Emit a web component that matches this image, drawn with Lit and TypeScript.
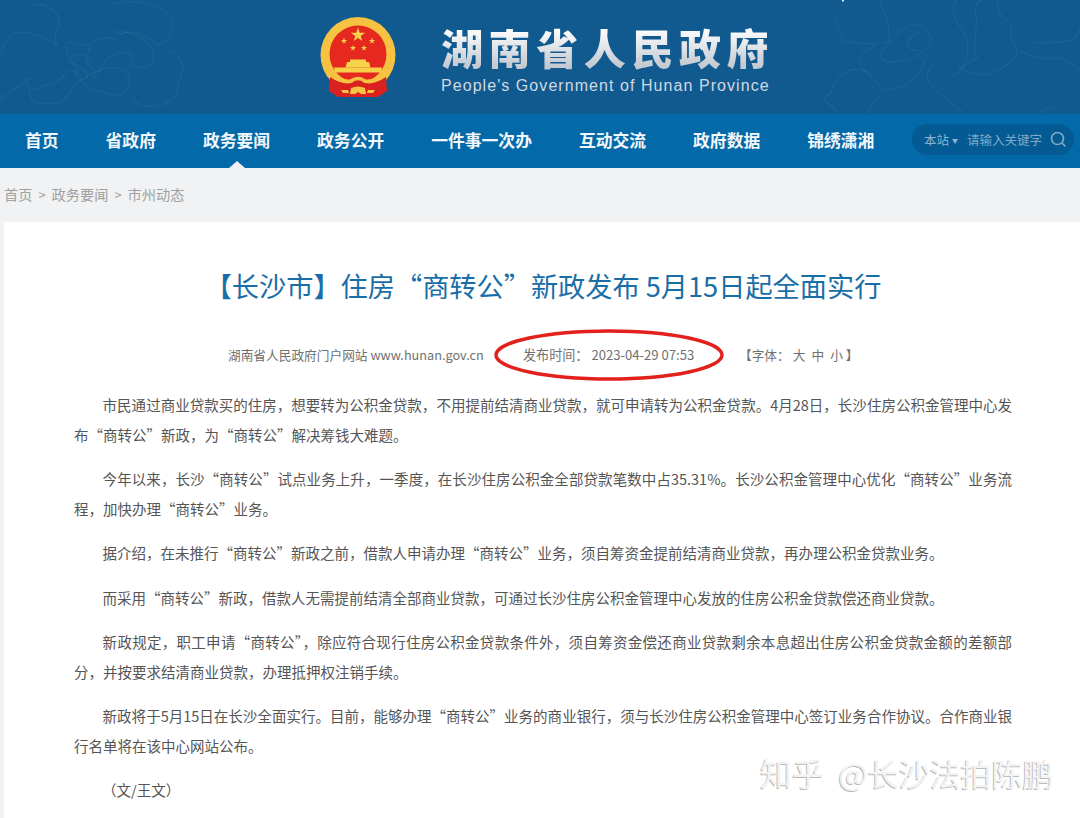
import { LitElement, html, css, svg } from "lit";
import { customElement } from "lit/decorators.js";

const star = (cx: number, cy: number, r: number) => {
  const pts: string[] = [];
  for (let i = 0; i < 10; i++) {
    const a = -Math.PI / 2 + (i * Math.PI) / 5;
    const q = i % 2 ? r * 0.38 : r;
    pts.push(`${(cx + q * Math.cos(a)).toFixed(1)},${(cy + q * Math.sin(a)).toFixed(1)}`);
  }
  return svg`<polygon points=${pts.join(" ")} fill="#f8d24a"/>`;
};

const NAV = ["首页", "省政府", "政务要闻", "政务公开", "一件事一次办", "互动交流", "政府数据", "锦绣潇湘"];

const PARAS = [
  "市民通过商业贷款买的住房，想要转为公积金贷款，不用提前结清商业贷款，就可申请转为公积金贷款。4月28日，长沙住房公积金管理中心发布“商转公”新政，为“商转公”解决筹钱大难题。",
  "今年以来，长沙“商转公”试点业务上升，一季度，在长沙住房公积金全部贷款笔数中占35.31%。长沙公积金管理中心优化“商转公”业务流程，加快办理“商转公”业务。",
  "据介绍，在未推行“商转公”新政之前，借款人申请办理“商转公”业务，须自筹资金提前结清商业贷款，再办理公积金贷款业务。",
  "而采用“商转公”新政，借款人无需提前结清全部商业贷款，可通过长沙住房公积金管理中心发放的住房公积金贷款偿还商业贷款。",
  "新政规定，职工申请“商转公”，除应符合现行住房公积金贷款条件外，须自筹资金偿还商业贷款剩余本息超出住房公积金贷款金额的差额部分，并按要求结清商业贷款，办理抵押权注销手续。",
  "新政将于5月15日在长沙全面实行。目前，能够办理“商转公”业务的商业银行，须与长沙住房公积金管理中心签订业务合作协议。合作商业银行名单将在该中心网站公布。",
];

@customElement("app-root")
export class AppRoot extends LitElement {
  static styles = css`
    :host {
      display: block;
      position: relative;
      width: 1080px;
      height: 818px;
      overflow: hidden;
      background: #f1f2f3;
      font-family: "Noto Sans CJK SC", "Liberation Sans", sans-serif;
    }
    .head {
      position: relative;
      height: 114px;
      background: #115a8f;
      display: flex;
      padding-left: 320px;
      box-sizing: border-box;
    }
    .pattern { position: absolute; inset: 0; width: 1080px; height: 114px; }
    .emblem { position: relative; width: 76px; height: 80px; margin-top: 17px; flex: none; }
    .brand { position: relative; margin-left: 45px; padding-top: 20px; }
    .cn {
      font-size: 42px;
      line-height: 54px;
      font-weight: 900;
      letter-spacing: 5.6px;
      white-space: nowrap;
      background: linear-gradient(#ffffff 15%, #c4cad1 85%);
      -webkit-background-clip: text;
      background-clip: text;
      color: transparent;
    }
    .en {
      font-family: "Liberation Sans", sans-serif;
      font-size: 16px;
      line-height: 20px;
      margin-top: 2px;
      letter-spacing: 1.06px;
      color: #d0d8e2;
      white-space: nowrap;
    }
    .nav {
      position: relative;
      height: 54px;
      background: #0369a8;
      display: flex;
      align-items: center;
      gap: 47px;
      padding-left: 25px;
      box-sizing: border-box;
    }
    .nav a {
      position: relative;
      font-size: 16.8px;
      font-weight: 700;
      color: #f2f7fb;
      white-space: nowrap;
      line-height: 52px;
      padding-bottom: 2px;
    }
    .nav a.on::after {
      content: "";
      position: absolute;
      left: 50%;
      bottom: 0;
      margin-left: -8px;
      border-left: 8px solid transparent;
      border-right: 8px solid transparent;
      border-bottom: 7px solid #f1f2f3;
    }
    .search {
      position: absolute;
      left: 912px;
      top: 10px;
      width: 162px;
      height: 31px;
      border-radius: 16px;
      background: #045a92;
      display: flex;
      align-items: center;
      padding-left: 12px;
      box-sizing: border-box;
      font-size: 12.5px;
      white-space: nowrap;
    }
    .scope { color: #8db6d2; width: 43px; flex: none; }
    .scope i { font-style: normal; font-size: 6px; margin-left: 3px; vertical-align: 2px; }
    .ph { color: #7fa9c6; width: 83px; flex: none; }
    .crumb {
      height: 52px;
      padding: 0 0 2px 4px;
      display: flex;
      align-items: center;
      font-size: 14.2px;
      color: #a0a0a0;
      white-space: nowrap;
    }
    .crumb b { font-weight: 400; font-size: 13px; margin: 0 6px; }
    .card {
      margin-left: 4px;
      background: #fff;
      height: 596px;
      box-sizing: border-box;
      padding: 44px 68px 0 70px;
      color: #4a4a4a;
    }
    h1 {
      margin: 0;
      font-size: 27.2px;
      line-height: 38px;
      font-weight: 400;
      color: #1a6ea8;
      text-align: center;
      white-space: nowrap;
    }
    .meta {
      display: flex;
      margin: 40px 0 0 154px;
      height: 20px;
      align-items: center;
      font-size: 12.7px;
      color: #707070;
      white-space: nowrap;
    }
    .src { width: 295px; flex: none; }
    .time { width: 216px; flex: none; font-size: 13.1px; }
    .tools span { margin: 0 3px; }
    .body { margin-top: 26px; font-size: 14.5px; line-height: 30px; color: #555; }
    .body p { margin: 0 0 14.2px; text-indent: 28.6px; text-align: justify; }
    .body p.sign { text-indent: 28px; margin-top: 1px; }
    .ring { position: absolute; left: 490px; top: 326px; width: 240px; height: 58px; }
    .mark {
      position: absolute;
      left: 760px;
      top: 752px;
      font-size: 32px;
      line-height: 40px;
      word-spacing: 7px;
      color: #f3f3f3;
      white-space: nowrap;
      text-shadow: -1px 1px 0 #bbbbbb;
    }
    .mark span { font-size: 31px; }
  `;

  render() {
    return html`
      <div class="head">
        <svg class="pattern" viewBox="0 0 1080 114" fill="none" stroke="#ffffff" stroke-opacity=".05" stroke-width="1.2">
          <path d="M33 6c6-4 14-1 20 4s8 12 4 20c-2 4-3 10 0 15-12-6-28-16-42-12-8 2-11 14-15 22"/>
          <path d="M108 8c4-6 16-8 28-6 14 2 32 6 36 18 2 8-2 16-6 22l-8 3c-10-8-26-18-40-10"/>
          <path d="M67 42c8 0 14 6 22 2 10-6 18-8 28-4M66 42c-2 12 8 20 10 28 2 6-2 6-2 6M92 60c-10-8-20-6-24 0 6 4 12 6 18 12 4 6 0 8-6 8"/>
          <path d="M115 32c14-2 28 6 36 14 4 8 4 16-2 20-6 2-14 2-18-2 6-8-2-14-14-10-12 2-16 14-22 24"/>
          <path d="M92 46c-6 6-8 14-2 20s6 10 2 12M30 90c14-4 26-6 34-14 2-6 12-8 16 0"/>
          <path d="M80 80c14-8 30-16 42-10 8 4 10 12 6 18-4 8-14 8-20 6-8-4-18-2-28-14zM80 80c-8 8-12 16-18 22-10 2-20 4-30-2"/>
          <path d="M165 52c8-2 14 4 17 10 3 8-2 16-4 22 2 10-6 16-14 20-14 4-24 2-32-4"/>
          <path d="M32 78c-14 8-24 14-32 22M28 78c-2 8 2 16 4 22"/>
          <path d="M835 14c2 10 4 18 8 26 14 6 32 4 46 2 2-12-4-30-10-42"/>
          <path d="M877 44c-6 4-14 6-17 16-2 8 8 12 14 20l10 10c8 0 18-2 26-8 6-6 14-12 14-22"/>
          <path d="M898 33c-4 6-14 14-18 22 2 6 10 8 16 6 6 0 12 0 22-6 8-6 16-12 12-20-4-10-14-16-32-2zM920 33c-8 2-14 8-12 14 4 4 8 4 12 2"/>
          <path d="M957 0c-6 6-4 20 4 28 8 10 10 30 0 42-2 2-6 4-8 6"/>
          <path d="M982 0c-10 4-6 14-5 22-3 14-2 30 0 36l-18 10c12 6 20 8 30 6 12-4 20-10 26-16 6-8-2-14-4-20 2-8 0-16-8-20-6-6-4-14-6-18"/>
          <path d="M1035 42c12 2 26 0 36-2 5-2 8-8 9-12M1020 50c10 8 26 10 36 8 10 0 18 6 24 12M880 96c-6 6-14 12-10 18"/>
          <path d="M935 62c-6 6-10 12-6 20 6 8 20 20 34 30M867 72c-12-6-22-2-30 8-6 6-2 14-14 18 4 6 12 8 14 16"/>
          <path d="M1040 114c4-6 10-8 14-4" />
          <path d="M842 0.500h2" stroke="#dff3ff" stroke-opacity="1" stroke-width="2"/>
        </svg>
        <svg class="emblem" viewBox="0 0 76 80">
          <ellipse cx="38" cy="38" rx="37.5" ry="38" fill="#f6c241"/>
          <circle cx="38" cy="37" r="28.5" fill="#e5291f"/>
          ${star(38, 18, 7.5)}${star(24, 24, 3.4)}${star(52, 24, 3.4)}${star(33, 31, 3.2)}${star(44, 31, 3.2)}
          <path d="M30 42.500h16v2.500h3l1.500 5.500H25.500L27 45h3z" fill="#f8d24a"/>
          <path d="M14 50.500h48l-1 5H15z" fill="#f8cf49"/>
          <path d="M10 60q12 8 21 6 7-4 14 0 9 2 21-6l1 14-9 6H18l-9-6z" fill="#d9211f"/>
          <path d="M10 55q12 11 21 9 7-5 14 0 9 2 21-9" fill="none" stroke="#f6c241" stroke-width="3.400"/>
          <path d="M31 71q7-3 14 0l1 6h-5l-3-2-3 2h-5zM21 73l7 0 1 3h-6zM48 73h7l-2 3h-6z" fill="#f6c241"/>
        </svg>
        <div class="brand">
          <div class="cn">湖南省人民政府</div>
          <div class="en">People's Government of Hunan Province</div>
        </div>
      </div>
      <nav class="nav">
        ${NAV.map((n, i) => html`<a class=${i === 2 ? "on" : ""}>${n}</a>`)}
        <div class="search">
          <span class="scope">本站<i>▼</i></span>
          <span class="ph">请输入关键字</span>
          <svg width="17" height="17" viewBox="0 0 17 17" fill="none" stroke="#7fa9c6" stroke-width="1.7">
            <circle cx="7.5" cy="7.5" r="6"/><path d="M12 12l3.500 3.500"/>
          </svg>
        </div>
      </nav>
      <div class="crumb">首页<b>&gt;</b>政务要闻<b>&gt;</b>市州动态</div>
      <main class="card">
        <h1>【长沙市】住房“商转公”新政发布 5月15日起全面实行</h1>
        <div class="meta">
          <span class="src">湖南省人民政府门户网站 www.hunan.gov.cn</span>
          <span class="time">发布时间： 2023-04-29 07:53</span>
          <span class="tools">【字体：<span>大</span><span>中</span><span>小</span>】</span>
        </div>
        <div class="body">
          ${PARAS.map((p) => html`<p>${p}</p>`)}
          <p class="sign">（文/王文）</p>
        </div>
      </main>
      <svg class="ring" viewBox="0 0 240 58" fill="none">
        <ellipse cx="119" cy="29" rx="113" ry="24" stroke="#e3211c" stroke-width="3.4"/>
      </svg>
      <div class="mark">知乎 <span>@长沙法拍陈鹏</span></div>
    `;
  }
}
